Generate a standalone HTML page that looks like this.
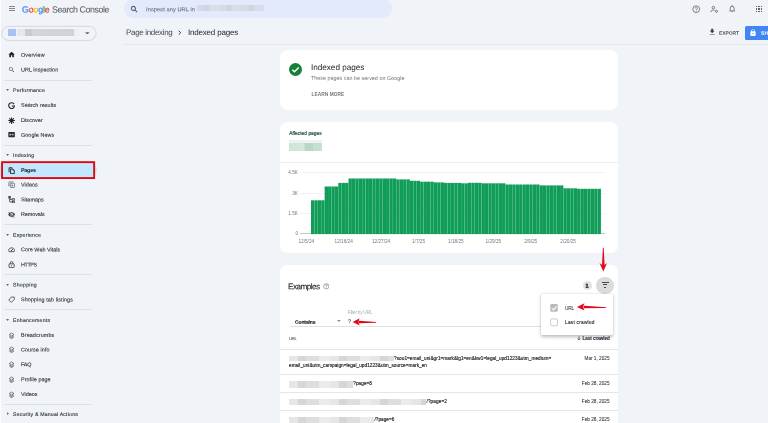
<!DOCTYPE html><html><head><meta charset="utf-8"><title>Google Search Console</title><style>
html,body{margin:0;padding:0;}body{width:768px;height:423px;overflow:hidden;background:#f0f4f9;position:relative;font-family:"Liberation Sans",sans-serif;}
#r{position:absolute;left:0;top:0;width:768px;height:423px;overflow:hidden;opacity:0.999;}
#r div,#r svg{position:absolute;}
#r span.t{position:absolute;white-space:nowrap;line-height:1;}
</style></head><body><div id="r">
<div style="left:8.6px;top:6.1px;width:6.4px;height:1.0px;background:#85898e;"></div>
<div style="left:8.6px;top:8.2px;width:6.4px;height:1.0px;background:#85898e;"></div>
<div style="left:8.6px;top:10.3px;width:6.4px;height:1.0px;background:#85898e;"></div>
<div style="left:124px;top:-1.2px;width:268px;height:19.2px;background:#e2eafc;border-radius:9.6px;"></div>
<svg style="left:130.3px;top:5.0px" width="8.6" height="8.6" viewBox="0 0 24 24"><path fill="#3c4043" stroke="#3c4043" stroke-width="0.6" d="M15.5 14h-.79l-.28-.27A6.47 6.47 0 0 0 16 9.5 6.5 6.5 0 1 0 9.5 16c1.61 0 3.09-.59 4.23-1.57l.27.28v.79l5 4.99L20.49 19l-4.99-5zm-6 0C7.01 14 5 11.99 5 9.5S7.01 5 9.500 5 14 7.01 14 9.5 11.99 14 9.5 14z"/></svg>
<div style="left:197px;top:4.8px;width:67px;height:6.2px;background:repeating-linear-gradient(90deg,#d6dbe7 0,#d6dbe7 7px,#cfd5e1 7px,#cfd5e1 13px,#d9deea 13px,#d9deea 22px);filter:blur(0.7px);"></div>
<svg style="left:692.2px;top:4.6px" width="8.4" height="8.4" viewBox="0 0 24 24"><circle cx="12" cy="12" r="9.800" fill="none" stroke="#50545a" stroke-width="2"/><path fill="none" stroke="#50545a" stroke-width="2" d="M8.800 9.800a3.200 3.200 0 1 1 5 2.600c-1.200.8-1.800 1.400-1.800 2.800"/><circle cx="12" cy="18" r="1.300" fill="#50545a"/></svg>
<svg style="left:709.8px;top:4.6px" width="8.600" height="8.600" viewBox="0 0 24 24"><g fill="none" stroke="#50545a" stroke-width="2.100"><circle cx="9.500" cy="7.500" r="3.600"/><path d="M2.500 20v-1.500c0-2.600 3.400-4.200 7-4.200 .9 0 1.700.1 2.500.3"/><circle cx="18" cy="17.500" r="3"/></g></svg>
<svg style="left:728.000px;top:4.300px" width="8.400" height="9" viewBox="0 0 24 24"><path fill="none" stroke="#50545a" stroke-width="2.100" stroke-linejoin="round" d="M6.500 17.500v-6.500a5.500 5.500 0 0 1 11 0v6.500l1.800 1.500H4.700z"/><path fill="#50545a" d="M10 20.500h4a2 2 0 0 1-4 0zM10.800 2.800h2.400v3h-2.400z"/></svg>
<div style="left:755.9px;top:5.7px;width:1.4px;height:1.4px;background:#5f6368;"></div>
<div style="left:755.9px;top:8.2px;width:1.4px;height:1.4px;background:#5f6368;"></div>
<div style="left:755.9px;top:10.7px;width:1.4px;height:1.4px;background:#5f6368;"></div>
<div style="left:758.4px;top:5.7px;width:1.4px;height:1.4px;background:#5f6368;"></div>
<div style="left:758.4px;top:8.2px;width:1.4px;height:1.4px;background:#5f6368;"></div>
<div style="left:758.4px;top:10.7px;width:1.4px;height:1.4px;background:#5f6368;"></div>
<div style="left:760.9px;top:5.7px;width:1.4px;height:1.4px;background:#5f6368;"></div>
<div style="left:760.9px;top:8.2px;width:1.4px;height:1.4px;background:#5f6368;"></div>
<div style="left:760.9px;top:10.7px;width:1.4px;height:1.4px;background:#5f6368;"></div>
<svg style="left:178.3px;top:30.4px" width="4" height="6" viewBox="0 0 4 6"><path d="M0.7 0.8 L2.8 2.700 L0.7 4.600" fill="none" stroke="#444746" stroke-width="1"/></svg>
<svg style="left:707.6px;top:27.4px" width="8.4" height="9.6" viewBox="0 0 24 24"><path fill="#3c4043" d="M19 9h-4V3H9v6H5l7 7 7-7zM5 18v2h14v-2H5z"/></svg>
<div style="left:745px;top:26px;width:30px;height:13.6px;background:#4285f4;border-radius:1.6px;"></div>
<svg style="left:749.3px;top:27.6px" width="8" height="9.2" viewBox="0 0 24 24"><path fill="#fff" d="M18 8h-1V6c0-2.760-2.240-5-5-5S7 3.240 7 6v2H6c-1.100 0-2 .9-2 2v10c0 1.100.9 2 2 2h12c1.100 0 2-.9 2-2V10c0-1.100-.9-2-2-2zm-6 9c-1.100 0-2-.9-2-2s.9-2 2-2 2 .9 2 2-.9 2-2 2zm3.100-9H8.900V6c0-1.710 1.390-3.100 3.100-3.100 1.710 0 3.100 1.390 3.100 3.100v2z"/></svg>
<div style="left:124px;top:43.9px;width:644px;height:0.9px;background:#e4e7eb;"></div>
<div style="left:0px;top:0px;width:0.9px;height:423px;background:#fbfcfe;"></div>
<svg style="left:0;top:24px" width="100" height="20" viewBox="0 0 100 20"><rect x="1.700" y="2.300" width="94.500" height="14.100" rx="7.050" fill="none" stroke="#cdd1d6" stroke-width="0.800"/></svg>
<div style="left:8.1px;top:28.9px;width:8.2px;height:7px;background:#a8c1f7;filter:blur(0.3px);"></div>
<div style="left:17px;top:29px;width:63px;height:6.8px;background:linear-gradient(90deg,#e6e7ea 0,#e6e7ea 12%,#c9cbcf 12%,#c9cbcf 24.500%,#d3d5d9 24.500%,#d0d2d6 90%,#eceef1 90%,#eef0f3 100%);filter:blur(0.6px);"></div>
<svg style="left:85px;top:31.6px" width="4.6" height="2.6" viewBox="0 0 10 5"><path fill="#5f6368" d="M0 0h10L5 5z"/></svg>
<svg style="left:8.0px;top:51.30px" width="7.2" height="7.2" viewBox="0 0 24 24"><path fill="#202124" d="M10 20.500v-6.500h4v6.500h5.500v-8.500h3L12 2.500 1.500 12h3v8.500z"/></svg>
<svg style="left:8.0px;top:66.20px" width="7.2" height="7.2" viewBox="0 0 24 24"><path fill="#3c4043" d="M15.500 14h-.79l-.28-.27A6.470 6.470 0 0 0 16 9.500 6.500 6.500 0 1 0 9.500 16c1.610 0 3.090-.59 4.230-1.570l.27.28v.79l5 4.990L20.490 19l-4.990-5zm-6 0C7.010 14 5 11.990 5 9.500S7.010 5 9.500 5 14 7.010 14 9.500 11.990 14 9.500 14z"/></svg>
<div style="left:4px;top:79.7px;width:88px;height:1px;background:#dde1e6;"></div>
<svg style="left:6.3px;top:89.2px" width="3.2" height="1.9" viewBox="0 0 10 5"><path fill="#3c4043" d="M0 0h10L5 5z"/></svg>
<svg style="left:8.0px;top:101.50px" width="7.2" height="7.2" viewBox="0 0 24 24"><path fill="none" stroke="#202124" stroke-width="3.800" d="M20.300 7.200A9.600 9.600 0 1 0 21.600 13.400H12.500"/></svg>
<svg style="left:8.0px;top:116.70px" width="7.2" height="7.2" viewBox="0 0 24 24"><g stroke="#202124" stroke-width="3.400" stroke-linecap="round"><path d="M12 2.500v19M2.500 12h19M5.300 5.300l13.400 13.400M18.700 5.300L5.300 18.700"/></g><circle cx="12" cy="12" r="5.500" fill="#202124"/></svg>
<svg style="left:8.0px;top:131.30px" width="7.2" height="7.2" viewBox="0 0 24 24"><rect x="1" y="3.500" width="22" height="17" rx="2" fill="#2a2d30"/><rect x="5" y="9.500" width="5.500" height="5" fill="#c9ced6"/><rect x="13" y="9.500" width="6" height="5" fill="#aeb4bd"/></svg>
<div style="left:4px;top:144.9px;width:88px;height:1px;background:#dde1e6;"></div>
<svg style="left:6.3px;top:154.1px" width="3.2" height="1.9" viewBox="0 0 10 5"><path fill="#3c4043" d="M0 0h10L5 5z"/></svg>
<div style="left:0px;top:162.6px;width:96.8px;height:14.8px;background:#d3e6fa;border-radius:0 7.4px 7.4px 0;"></div>
<svg style="left:0;top:160px" width="97" height="20" viewBox="0 0 97 20"><rect x="2.050" y="2.150" width="92.100" height="15.900" fill="#c2e7ff" stroke="#dc0a0e" stroke-width="1.900"/></svg>
<svg style="left:8.0px;top:166.60px" width="7.2" height="7.2" viewBox="0 0 24 24"><path fill="none" stroke="#202124" stroke-width="3" stroke-linejoin="round" d="M8.500 6.500h7.500l5 5v10.500h-12.500z"/><path fill="none" stroke="#202124" stroke-width="3" stroke-linejoin="round" d="M3.500 17.500V2.500h11"/><path fill="#202124" d="M15 6v6h6z"/></svg>
<svg style="left:8.0px;top:181.00px" width="7.2" height="7.2" viewBox="0 0 24 24"><rect x="7.500" y="7.500" width="14.500" height="14.500" rx="2.500" fill="none" stroke="#5f6368" stroke-width="2.600"/><path fill="none" stroke="#5f6368" stroke-width="2.600" d="M3 17.500V5.500a2.500 2.500 0 0 1 2.500-2.500h12"/><path fill="#5f6368" d="M12.200 10.800v8l6-4z"/></svg>
<svg style="left:8.0px;top:196.00px" width="7.2" height="7.2" viewBox="0 0 24 24"><g fill="none" stroke="#3c4043" stroke-width="2.600"><rect x="2.500" y="2" width="6" height="5.500"/><rect x="14" y="9" width="7.500" height="5"/><rect x="14" y="17.500" width="7.500" height="5"/><path d="M5.500 7.500v12.500H14M5.500 11.500H14"/></g></svg>
<svg style="left:8.0px;top:210.70px" width="7.2" height="7.2" viewBox="0 0 24 24"><path fill="#3c4043" stroke="#3c4043" stroke-width="0.800" d="M12 7c2.760 0 5 2.240 5 5 0 .65-.13 1.260-.36 1.830l2.920 2.920c1.510-1.260 2.700-2.890 3.430-4.750-1.730-4.390-6-7.500-11-7.500-1.400 0-2.740.25-3.980.7l2.160 2.160C10.740 7.130 11.350 7 12 7zM2 4.270l2.280 2.280.46.46A11.800 11.800 0 0 0 1 12c1.730 4.390 6 7.500 11 7.500 1.550 0 3.030-.3 4.380-.84l.42.42L19.730 22 21 20.730 3.270 3 2 4.270zM7.530 9.800l1.550 1.550c-.05.21-.08.43-.08.650 0 1.660 1.340 3 3 3 .22 0 .44-.3.650-.08l1.550 1.550c-.67.330-1.410.53-2.200.53-2.760 0-5-2.240-5-5 0-.79.200-1.530.53-2.200z"/></svg>
<div style="left:4px;top:223.7px;width:88px;height:1px;background:#dde1e6;"></div>
<svg style="left:6.3px;top:233.89999999999998px" width="3.2" height="1.9" viewBox="0 0 10 5"><path fill="#3c4043" d="M0 0h10L5 5z"/></svg>
<svg style="left:8.0px;top:246.00px" width="7.2" height="7.2" viewBox="0 0 24 24"><g fill="none" stroke="#3c4043" stroke-width="2.800" stroke-linejoin="round"><path d="M3.500 19C0.500 14 3 6 12 6S23.500 14 20.500 19z"/><path d="M12 14.500l4.500-4.500"/></g><circle cx="11.800" cy="14.800" r="2" fill="#3c4043"/></svg>
<svg style="left:8.0px;top:261.00px" width="7.2" height="7.2" viewBox="0 0 24 24"><g fill="none" stroke="#3c4043" stroke-width="2.800"><rect x="3.500" y="9.500" width="17" height="12.500" rx="1.500"/><path d="M7.500 9.500V6.500a4.500 4.500 0 0 1 9 0v3"/></g><circle cx="12" cy="15.800" r="2" fill="#3c4043"/></svg>
<div style="left:4px;top:274.1px;width:88px;height:1px;background:#dde1e6;"></div>
<svg style="left:6.3px;top:283.8px" width="3.2" height="1.9" viewBox="0 0 10 5"><path fill="#3c4043" d="M0 0h10L5 5z"/></svg>
<svg style="left:8.0px;top:296.00px" width="7.2" height="7.2" viewBox="0 0 24 24"><path fill="none" stroke="#3c4043" stroke-width="2.600" stroke-linejoin="round" d="M2.500 14l8-10.500H21v8.500l-10 9z"/></svg>
<div style="left:4px;top:309.1px;width:88px;height:1px;background:#dde1e6;"></div>
<svg style="left:6.3px;top:319.09999999999997px" width="3.2" height="1.9" viewBox="0 0 10 5"><path fill="#3c4043" d="M0 0h10L5 5z"/></svg>
<svg style="left:8.0px;top:331.50px" width="7.2" height="7.2" viewBox="0 0 24 24"><g fill="none" stroke="#4a4e52" stroke-width="2.500" stroke-linejoin="round"><path d="M12 3.500l7.500 5-7.500 5-7.500-5z"/><path d="M4.500 13l7.500 5 7.500-5"/><path d="M4.500 17l7.500 5 7.500-5"/></g></svg>
<svg style="left:8.0px;top:346.20px" width="7.2" height="7.2" viewBox="0 0 24 24"><g fill="none" stroke="#4a4e52" stroke-width="2.500" stroke-linejoin="round"><path d="M12 3.500l7.500 5-7.500 5-7.500-5z"/><path d="M4.500 13l7.500 5 7.500-5"/><path d="M4.500 17l7.500 5 7.500-5"/></g></svg>
<svg style="left:8.0px;top:360.90px" width="7.2" height="7.2" viewBox="0 0 24 24"><g fill="none" stroke="#4a4e52" stroke-width="2.500" stroke-linejoin="round"><path d="M12 3.500l7.500 5-7.500 5-7.500-5z"/><path d="M4.500 13l7.500 5 7.500-5"/><path d="M4.500 17l7.500 5 7.500-5"/></g></svg>
<svg style="left:8.0px;top:375.90px" width="7.2" height="7.2" viewBox="0 0 24 24"><g fill="none" stroke="#4a4e52" stroke-width="2.500" stroke-linejoin="round"><path d="M12 3.500l7.500 5-7.500 5-7.500-5z"/><path d="M4.500 13l7.500 5 7.500-5"/><path d="M4.500 17l7.500 5 7.500-5"/></g></svg>
<svg style="left:8.0px;top:390.50px" width="7.2" height="7.2" viewBox="0 0 24 24"><g fill="none" stroke="#4a4e52" stroke-width="2.500" stroke-linejoin="round"><path d="M12 3.500l7.500 5-7.500 5-7.500-5z"/><path d="M4.500 13l7.500 5 7.500-5"/><path d="M4.500 17l7.500 5 7.500-5"/></g></svg>
<div style="left:4px;top:403.8px;width:88px;height:1px;background:#dde1e6;"></div>
<svg style="left:6.6px;top:412.29999999999995px" width="2" height="3.2" viewBox="0 0 5 10"><path fill="#5f6368" d="M0 0v10l5-5z"/></svg>
<div style="left:280px;top:50px;width:338px;height:59.6px;background:#fff;border-radius:7.5px;"></div>
<svg style="left:288.8px;top:63.2px" width="13" height="13" viewBox="0 0 24 24"><circle cx="12" cy="12" r="12" fill="#188038"/><path d="M6.200 12.400l3.900 3.900 7.800-8" fill="none" stroke="#fff" stroke-width="2.600"/></svg>
<div style="left:280px;top:121.5px;width:338px;height:131.6px;background:#fff;border-radius:7.5px;"></div>
<div style="left:288.6px;top:139.9px;width:33.3px;height:3.2px;background:#edf4f0;filter:blur(0.3px);"></div>
<div style="left:288.6px;top:142.8px;width:33.3px;height:8.2px;background:linear-gradient(90deg,#cde6d9 0,#d2e9dc 46%,#b6d8c4 49%,#b6d8c4 72%,#c3dfce 74%,#c6e1d1 100%);filter:blur(0.4px);"></div>
<div style="left:280px;top:161.7px;width:338px;height:0.8px;background:#eaecee;"></div>
<div style="left:300px;top:172.1px;width:305px;height:0.8px;background:#f1f1f1;"></div>
<div style="left:300px;top:192.5px;width:305px;height:0.8px;background:#f1f1f1;"></div>
<div style="left:300px;top:212.9px;width:305px;height:0.8px;background:#f1f1f1;"></div>
<div style="left:300px;top:233.1px;width:305px;height:0.8px;background:#c6c9cd;"></div>
<svg style="left:300px;top:165px" width="310" height="70" viewBox="0 0 310 70"><g fill="#0f9d58"><rect x="11.00" y="35.30" width="3.34" height="33.80"/><rect x="14.41" y="35.30" width="3.34" height="33.80"/><rect x="17.82" y="35.30" width="3.34" height="33.80"/><rect x="21.24" y="35.30" width="3.34" height="33.80"/><rect x="24.65" y="21.50" width="3.34" height="47.60"/><rect x="28.06" y="21.50" width="3.34" height="47.60"/><rect x="31.47" y="21.50" width="3.34" height="47.60"/><rect x="34.88" y="21.50" width="3.34" height="47.60"/><rect x="38.29" y="17.90" width="3.34" height="51.20"/><rect x="41.71" y="17.90" width="3.34" height="51.20"/><rect x="45.12" y="17.90" width="3.34" height="51.20"/><rect x="48.53" y="13.50" width="3.34" height="55.60"/><rect x="51.94" y="13.50" width="3.34" height="55.60"/><rect x="55.35" y="13.50" width="3.34" height="55.60"/><rect x="58.76" y="13.50" width="3.34" height="55.60"/><rect x="62.18" y="13.50" width="3.34" height="55.60"/><rect x="65.59" y="13.50" width="3.34" height="55.60"/><rect x="69.00" y="13.50" width="3.34" height="55.60"/><rect x="72.41" y="13.50" width="3.34" height="55.60"/><rect x="75.82" y="13.50" width="3.34" height="55.60"/><rect x="79.24" y="13.50" width="3.34" height="55.60"/><rect x="82.65" y="13.50" width="3.34" height="55.60"/><rect x="86.06" y="13.50" width="3.34" height="55.60"/><rect x="89.47" y="13.50" width="3.34" height="55.60"/><rect x="92.88" y="13.50" width="3.34" height="55.60"/><rect x="96.29" y="14.40" width="3.34" height="54.70"/><rect x="99.71" y="14.40" width="3.34" height="54.70"/><rect x="103.12" y="14.40" width="3.34" height="54.70"/><rect x="106.53" y="14.40" width="3.34" height="54.70"/><rect x="109.94" y="15.80" width="3.34" height="53.30"/><rect x="113.35" y="15.80" width="3.34" height="53.30"/><rect x="116.76" y="15.80" width="3.34" height="53.30"/><rect x="120.18" y="16.70" width="3.34" height="52.40"/><rect x="123.59" y="16.70" width="3.34" height="52.40"/><rect x="127.00" y="16.70" width="3.34" height="52.40"/><rect x="130.41" y="16.70" width="3.34" height="52.40"/><rect x="133.82" y="17.40" width="3.34" height="51.70"/><rect x="137.24" y="17.40" width="3.34" height="51.70"/><rect x="140.65" y="17.40" width="3.34" height="51.70"/><rect x="144.06" y="17.90" width="3.34" height="51.20"/><rect x="147.47" y="17.90" width="3.34" height="51.20"/><rect x="150.88" y="17.90" width="3.34" height="51.20"/><rect x="154.29" y="17.90" width="3.34" height="51.20"/><rect x="157.71" y="17.90" width="3.34" height="51.20"/><rect x="161.12" y="18.30" width="3.34" height="50.80"/><rect x="164.53" y="18.30" width="3.34" height="50.80"/><rect x="167.94" y="17.80" width="3.34" height="51.30"/><rect x="171.35" y="17.80" width="3.34" height="51.30"/><rect x="174.76" y="17.80" width="3.34" height="51.30"/><rect x="178.18" y="17.80" width="3.34" height="51.30"/><rect x="181.59" y="18.30" width="3.34" height="50.80"/><rect x="185.00" y="18.30" width="3.34" height="50.80"/><rect x="188.41" y="18.30" width="3.34" height="50.80"/><rect x="191.82" y="18.30" width="3.34" height="50.80"/><rect x="195.24" y="18.30" width="3.34" height="50.80"/><rect x="198.65" y="18.30" width="3.34" height="50.80"/><rect x="202.06" y="18.30" width="3.34" height="50.80"/><rect x="205.47" y="19.50" width="3.34" height="49.60"/><rect x="208.88" y="19.50" width="3.34" height="49.60"/><rect x="212.29" y="19.50" width="3.34" height="49.60"/><rect x="215.71" y="19.50" width="3.34" height="49.60"/><rect x="219.12" y="19.50" width="3.34" height="49.60"/><rect x="222.53" y="19.50" width="3.34" height="49.60"/><rect x="225.94" y="19.50" width="3.34" height="49.60"/><rect x="229.35" y="19.50" width="3.34" height="49.60"/><rect x="232.76" y="19.50" width="3.34" height="49.60"/><rect x="236.18" y="19.50" width="3.34" height="49.60"/><rect x="239.59" y="20.40" width="3.34" height="48.70"/><rect x="243.00" y="20.40" width="3.34" height="48.70"/><rect x="246.41" y="20.40" width="3.34" height="48.70"/><rect x="249.82" y="20.40" width="3.34" height="48.70"/><rect x="253.24" y="20.40" width="3.34" height="48.70"/><rect x="256.65" y="20.40" width="3.34" height="48.70"/><rect x="260.06" y="20.40" width="3.34" height="48.70"/><rect x="263.47" y="23.30" width="3.34" height="45.80"/><rect x="266.88" y="23.30" width="3.34" height="45.80"/><rect x="270.29" y="23.30" width="3.34" height="45.80"/><rect x="273.71" y="23.30" width="3.34" height="45.80"/><rect x="277.12" y="23.80" width="3.34" height="45.30"/><rect x="280.53" y="23.80" width="3.34" height="45.30"/><rect x="283.94" y="23.80" width="3.34" height="45.30"/><rect x="287.35" y="23.80" width="3.34" height="45.30"/><rect x="290.76" y="23.80" width="3.34" height="45.30"/><rect x="294.18" y="23.80" width="3.34" height="45.30"/><rect x="297.59" y="23.80" width="3.34" height="45.30"/></g></svg>
<div style="left:280px;top:264.6px;width:338px;height:170px;background:#fff;border-radius:7.5px;"></div>
<svg style="left:322.6px;top:283.3px" width="6.6" height="6.6" viewBox="0 0 24 24"><circle cx="12" cy="12" r="9.500" fill="none" stroke="#5f6368" stroke-width="2"/><path fill="none" stroke="#5f6368" stroke-width="2" d="M9 9.500a3 3 0 1 1 4.500 2.600c-1 .6-1.500 1.200-1.500 2.400"/><circle cx="12" cy="17.600" r="1.200" fill="#5f6368"/></svg>
<div style="left:583.0px;top:281.0px;width:8.6px;height:8.6px;background:#e2e2e2;border-radius:50%;"></div>
<div style="left:596.1px;top:276.7px;width:17.8px;height:17.8px;background:#dadbdc;border-radius:50%;"></div>
<div style="left:601.6px;top:282.05px;width:7.1px;height:0.75px;background:#44484c;"></div>
<div style="left:603.0px;top:284.3px;width:4.3px;height:0.75px;background:#44484c;"></div>
<div style="left:604.25px;top:286.55px;width:1.8px;height:0.75px;background:#44484c;"></div>
<svg style="left:337.300px;top:320.200px" width="3.800" height="1.900" viewBox="0 0 10 5"><path fill="#8a8d91" d="M0 0h10L5 5z"/></svg>
<div style="left:289.5px;top:326.0px;width:321px;height:0.8px;background:#e1e1e1;"></div>
<svg style="left:577.3px;top:336.3px" width="4" height="4.6" viewBox="0 0 8 9"><path d="M4 0.500v7M1 4.800l3 3 3-3" fill="none" stroke="#1f1f1f" stroke-width="1.200"/></svg>
<div style="left:280px;top:349.1px;width:338px;height:0.8px;background:#e4e6e9;"></div>
<div style="left:280px;top:374.1px;width:338px;height:0.8px;background:#e4e6e9;"></div>
<div style="left:280px;top:392.1px;width:338px;height:0.8px;background:#e4e6e9;"></div>
<div style="left:280px;top:410.1px;width:338px;height:0.8px;background:#e4e6e9;"></div>
<div style="left:288.8px;top:356.2px;width:105.0px;height:5px;background:repeating-linear-gradient(90deg,#e6e6e6 0,#e6e6e6 9px,#d6d6d6 9px,#d6d6d6 17px,#dedede 17px,#dedede 30px,#ebebeb 30px,#ebebeb 41px);filter:blur(0.5px);"></div>
<div style="left:288.8px;top:380.7px;width:64.5px;height:7px;background:repeating-linear-gradient(90deg,#e6e6e6 0,#e6e6e6 9px,#d6d6d6 9px,#d6d6d6 17px,#dedede 17px,#dedede 30px,#ebebeb 30px,#ebebeb 41px);filter:blur(0.5px);"></div>
<div style="left:288.8px;top:398.6px;width:137.5px;height:6px;background:repeating-linear-gradient(90deg,#e6e6e6 0,#e6e6e6 9px,#d6d6d6 9px,#d6d6d6 17px,#dedede 17px,#dedede 30px,#ebebeb 30px,#ebebeb 41px);filter:blur(0.5px);"></div>
<div style="left:288.8px;top:416.6px;width:85.69999999999999px;height:6px;background:repeating-linear-gradient(90deg,#e6e6e6 0,#e6e6e6 9px,#d6d6d6 9px,#d6d6d6 17px,#dedede 17px,#dedede 30px,#ebebeb 30px,#ebebeb 41px);filter:blur(0.5px);"></div>
<div style="left:541.4px;top:293.9px;width:71.7px;height:41.6px;background:#fff;border-radius:1.500px;box-shadow:0 1.200px 3.500px rgba(0,0,0,0.26),0 0 1px rgba(0,0,0,0.18);"></div>
<svg style="left:548px;top:302px" width="12" height="26" viewBox="0 0 12 26"><rect x="2.300" y="2.000" width="7.500" height="7.700" rx="1.200" fill="#bababa"/><path d="M3.700 6.000l1.900 1.900L8.600 4.300" fill="none" stroke="#fff" stroke-width="1.050"/><rect x="2.650" y="16.950" width="6.800" height="6.800" rx="0.900" fill="#fff" stroke="#b2b5b8" stroke-width="0.700"/></svg>
<svg style="left:0;top:0" width="768" height="423" viewBox="0 0 768 423"><g fill="#e0081a"><path d="M602.900 247.800L603.700 247.800L604.600 265.500L602.000 265.500z"/><path d="M599.500 263.000Q603.300 266.800 607.100 263.000L603.300 271.500z"/><path d="M606.100 307.300L606.100 308.100L584 308.300L584 305.700z"/><path d="M577.000 306.900L584.500 303.300Q582.300 306.900 584.500 310.500z"/><path d="M376.100 322.000L376.100 322.800L359 323.200L359 320.700z"/><path d="M352.600 321.900L359.700 318.300Q357.600 321.900 359.700 325.500z"/></g></svg>
<span class="t" id="t0" style="top:5px;font-size:8.8px;font-weight:400;color:#1f1f1f;letter-spacing:-0.156px;left:22px;transform:translate(0,0.60px) skewY(0.03deg);-webkit-text-stroke:0.25px;"><span style="color:#4285f4">G</span><span style="color:#ea4335">o</span><span style="color:#fbbc05">o</span><span style="color:#4285f4">g</span><span style="color:#34a853">l</span><span style="color:#ea4335">e</span></span>
<span class="t" id="t1" style="top:5px;font-size:8.8px;font-weight:400;color:#5f6368;letter-spacing:-0.400px;left:52px;transform:translate(0,0.60px) skewY(0.03deg);-webkit-text-stroke:0.1px #5f6368;">Search Console</span>
<span class="t" id="t2" style="top:7px;font-size:5.6px;font-weight:400;color:#6a6e73;letter-spacing:0.108px;left:146px;transform:translate(0,0.15px) skewY(0.03deg);-webkit-text-stroke:0.1px #6a6e73;">Inspect any URL in</span>
<span class="t" id="t3" style="top:29px;font-size:8px;font-weight:400;color:#444746;letter-spacing:-0.325px;left:125.5px;transform:translate(0,0.00px) skewY(0.03deg);">Page indexing</span>
<span class="t" id="t4" style="top:29px;font-size:8px;font-weight:400;color:#1f1f1f;letter-spacing:-0.192px;left:187.5px;transform:translate(0,0.00px) skewY(0.03deg);">Indexed pages</span>
<span class="t" id="t5" style="top:30px;font-size:5.0px;font-weight:700;color:#54585c;letter-spacing:-0.094px;left:719px;transform:translate(0,0.84px) skewY(0.03deg);">EXPORT</span>
<span class="t" id="t6" style="top:30px;font-size:5.0px;font-weight:700;color:#fff;left:760.7px;transform:translate(0,0.84px) skewY(0.03deg);letter-spacing:0.2px;">SHARE</span>
<span class="t" id="t7" style="top:52px;font-size:5.4px;font-weight:400;color:#2a2d30;letter-spacing:0.166px;left:20.7px;transform:translate(0,0.68px) skewY(0.03deg);-webkit-text-stroke:0.1px #2a2d30;">Overview</span>
<span class="t" id="t8" style="top:67px;font-size:5.4px;font-weight:400;color:#2a2d30;letter-spacing:0.060px;left:20.7px;transform:translate(0,0.58px) skewY(0.03deg);-webkit-text-stroke:0.1px #2a2d30;">URL inspection</span>
<span class="t" id="t9" style="top:88px;font-size:5.2px;font-weight:400;color:#3c4043;letter-spacing:0.209px;left:13.0px;transform:translate(0,0.01px) skewY(0.03deg);-webkit-text-stroke:0.15px #3c4043;">Performance</span>
<span class="t" id="t10" style="top:102px;font-size:5.4px;font-weight:400;color:#2a2d30;letter-spacing:0.052px;left:20.7px;transform:translate(0,0.88px) skewY(0.03deg);-webkit-text-stroke:0.1px #2a2d30;">Search results</span>
<span class="t" id="t11" style="top:118px;font-size:5.4px;font-weight:400;color:#2a2d30;letter-spacing:0.116px;left:20.7px;transform:translate(0,0.08px) skewY(0.03deg);-webkit-text-stroke:0.1px #2a2d30;">Discover</span>
<span class="t" id="t12" style="top:132px;font-size:5.4px;font-weight:400;color:#2a2d30;letter-spacing:0.084px;left:20.7px;transform:translate(0,0.68px) skewY(0.03deg);-webkit-text-stroke:0.1px #2a2d30;">Google News</span>
<span class="t" id="t13" style="top:152px;font-size:5.2px;font-weight:400;color:#3c4043;letter-spacing:0.234px;left:13.0px;transform:translate(0,0.91px) skewY(0.03deg);-webkit-text-stroke:0.15px #3c4043;">Indexing</span>
<span class="t" id="t14" style="top:167px;font-size:5.4px;font-weight:700;color:#1f1f1f;letter-spacing:-0.238px;left:20.7px;transform:translate(0,0.98px) skewY(0.03deg);">Pages</span>
<span class="t" id="t15" style="top:182px;font-size:5.4px;font-weight:400;color:#2a2d30;letter-spacing:0.085px;left:20.7px;transform:translate(0,0.38px) skewY(0.03deg);-webkit-text-stroke:0.1px #2a2d30;">Videos</span>
<span class="t" id="t16" style="top:197px;font-size:5.4px;font-weight:400;color:#2a2d30;letter-spacing:0.027px;left:20.7px;transform:translate(0,0.38px) skewY(0.03deg);-webkit-text-stroke:0.1px #2a2d30;">Sitemaps</span>
<span class="t" id="t17" style="top:212px;font-size:5.4px;font-weight:400;color:#2a2d30;letter-spacing:-0.046px;left:20.7px;transform:translate(0,0.08px) skewY(0.03deg);-webkit-text-stroke:0.1px #2a2d30;">Removals</span>
<span class="t" id="t18" style="top:232px;font-size:5.2px;font-weight:400;color:#3c4043;letter-spacing:0.215px;left:13.0px;transform:translate(0,0.71px) skewY(0.03deg);-webkit-text-stroke:0.15px #3c4043;">Experience</span>
<span class="t" id="t19" style="top:247px;font-size:5.4px;font-weight:400;color:#2a2d30;letter-spacing:0.036px;left:20.7px;transform:translate(0,0.38px) skewY(0.03deg);-webkit-text-stroke:0.1px #2a2d30;">Core Web Vitals</span>
<span class="t" id="t20" style="top:262px;font-size:5.4px;font-weight:400;color:#2a2d30;letter-spacing:-0.374px;left:20.7px;transform:translate(0,0.38px) skewY(0.03deg);-webkit-text-stroke:0.1px #2a2d30;">HTTPS</span>
<span class="t" id="t21" style="top:282px;font-size:5.2px;font-weight:400;color:#3c4043;letter-spacing:0.258px;left:13.0px;transform:translate(0,0.61px) skewY(0.03deg);-webkit-text-stroke:0.15px #3c4043;">Shopping</span>
<span class="t" id="t22" style="top:297px;font-size:5.4px;font-weight:400;color:#2a2d30;letter-spacing:0.107px;left:20.7px;transform:translate(0,0.38px) skewY(0.03deg);-webkit-text-stroke:0.1px #2a2d30;">Shopping tab listings</span>
<span class="t" id="t23" style="top:317px;font-size:5.2px;font-weight:400;color:#3c4043;letter-spacing:0.216px;left:13.0px;transform:translate(0,0.91px) skewY(0.03deg);-webkit-text-stroke:0.15px #3c4043;">Enhancements</span>
<span class="t" id="t24" style="top:332px;font-size:5.4px;font-weight:400;color:#2a2d30;letter-spacing:0.122px;left:20.7px;transform:translate(0,0.88px) skewY(0.03deg);-webkit-text-stroke:0.1px #2a2d30;">Breadcrumbs</span>
<span class="t" id="t25" style="top:347px;font-size:5.4px;font-weight:400;color:#2a2d30;letter-spacing:0.093px;left:20.7px;transform:translate(0,0.58px) skewY(0.03deg);-webkit-text-stroke:0.1px #2a2d30;">Course info</span>
<span class="t" id="t26" style="top:362px;font-size:5.4px;font-weight:400;color:#2a2d30;letter-spacing:-0.132px;left:20.7px;transform:translate(0,0.28px) skewY(0.03deg);-webkit-text-stroke:0.1px #2a2d30;">FAQ</span>
<span class="t" id="t27" style="top:377px;font-size:5.4px;font-weight:400;color:#2a2d30;letter-spacing:0.077px;left:20.7px;transform:translate(0,0.28px) skewY(0.03deg);-webkit-text-stroke:0.1px #2a2d30;">Profile page</span>
<span class="t" id="t28" style="top:391px;font-size:5.4px;font-weight:400;color:#2a2d30;letter-spacing:0.035px;left:20.7px;transform:translate(0,0.88px) skewY(0.03deg);-webkit-text-stroke:0.1px #2a2d30;">Videos</span>
<span class="t" id="t29" style="top:411px;font-size:5.2px;font-weight:400;color:#3c4043;letter-spacing:0.189px;left:13.0px;transform:translate(0,0.91px) skewY(0.03deg);-webkit-text-stroke:0.15px #3c4043;">Security &amp; Manual Actions</span>
<span class="t" id="t30" style="top:64px;font-size:8.2px;font-weight:400;color:#1f1f1f;letter-spacing:-0.032px;left:311.4px;transform:translate(0,0.09px) skewY(0.03deg);">Indexed pages</span>
<span class="t" id="t31" style="top:75px;font-size:5.4px;font-weight:400;color:#6c7074;letter-spacing:0.014px;left:311.4px;transform:translate(0,0.88px) skewY(0.03deg);">These pages can be served on Google</span>
<span class="t" id="t32" style="top:93px;font-size:4.8px;font-weight:700;color:#74787c;letter-spacing:0.075px;left:311.4px;">LEARN MORE</span>
<span class="t" id="t33" style="top:132px;font-size:4.8px;font-weight:400;color:#1d5745;letter-spacing:0.041px;left:289.2px;-webkit-text-stroke:0.2px #1d5745;">Affected pages</span>
<span class="t" id="t34" style="top:171px;font-size:4.7px;font-weight:400;color:#72767b;right:470.00px;">4.5K</span>
<span class="t" id="t35" style="top:192px;font-size:4.7px;font-weight:400;color:#72767b;right:470.00px;">3K</span>
<span class="t" id="t36" style="top:212px;font-size:4.7px;font-weight:400;color:#72767b;right:470.00px;">1.5K</span>
<span class="t" id="t37" style="top:232px;font-size:4.7px;font-weight:400;color:#72767b;right:470.00px;">0</span>
<span class="t" id="t38" style="top:240px;font-size:4.7px;font-weight:400;color:#72767b;left:306.3px;transform:translate(-50%,0);">12/5/24</span>
<span class="t" id="t39" style="top:240px;font-size:4.7px;font-weight:400;color:#72767b;left:343.7px;transform:translate(-50%,0);">12/16/24</span>
<span class="t" id="t40" style="top:240px;font-size:4.7px;font-weight:400;color:#72767b;left:381.1px;transform:translate(-50%,0);">12/27/24</span>
<span class="t" id="t41" style="top:240px;font-size:4.7px;font-weight:400;color:#72767b;left:418.5px;transform:translate(-50%,0);">1/7/25</span>
<span class="t" id="t42" style="top:240px;font-size:4.7px;font-weight:400;color:#72767b;left:455.9px;transform:translate(-50%,0);">1/18/25</span>
<span class="t" id="t43" style="top:240px;font-size:4.7px;font-weight:400;color:#72767b;left:493.3px;transform:translate(-50%,0);">1/29/25</span>
<span class="t" id="t44" style="top:240px;font-size:4.7px;font-weight:400;color:#72767b;left:530.7px;transform:translate(-50%,0);">2/9/25</span>
<span class="t" id="t45" style="top:240px;font-size:4.7px;font-weight:400;color:#72767b;left:568.1px;transform:translate(-50%,0);">2/20/25</span>
<span class="t" id="t46" style="top:283px;font-size:8.2px;font-weight:400;color:#1f1f1f;letter-spacing:-0.557px;left:287.7px;transform:translate(0,0.19px) skewY(0.03deg);-webkit-text-stroke:0.1px #1f1f1f;">Examples</span>
<span class="t" id="t47" style="top:283px;font-size:5.4px;font-weight:700;color:#111;left:587.4px;transform:translate(-50%,0.38px) skewY(0.03deg);-webkit-text-stroke:0.3px #111;">1</span>
<span class="t" id="t48" style="top:319px;font-size:5.0px;font-weight:700;color:#111;letter-spacing:-0.124px;left:295px;transform:translate(0,0.84px) skewY(0.03deg);-webkit-text-stroke:0.12px #111;">Contains</span>
<span class="t" id="t49" style="top:311px;font-size:4.7px;font-weight:400;color:#a9adb1;letter-spacing:-0.243px;left:347.8px;">Filter by URL</span>
<span class="t" id="t50" style="top:319px;font-size:5.6px;font-weight:400;color:#2a2a2a;left:347.6px;transform:translate(0,0.35px) skewY(0.03deg);-webkit-text-stroke:0.05px #2a2a2a;">?</span>
<span class="t" id="t51" style="top:337px;font-size:4.3px;font-weight:400;color:#4d5156;letter-spacing:-0.336px;left:289px;-webkit-text-stroke:0.05px #4d5156;">URL</span>
<span class="t" id="t52" style="top:337px;font-size:4.5px;font-weight:700;color:#1a1c2a;right:158.20px;-webkit-text-stroke:0.08px #1a1c2a;">Last crawled</span>
<span class="t" id="t53" style="top:357px;font-size:4.7px;font-weight:400;color:#1f1f1f;letter-spacing:0.056px;left:394px;-webkit-text-stroke:0.15px #1f1f1f;">?sou1=email_uni&amp;gr1=mark&amp;lg1=en&amp;kw1=legal_upd1223&amp;utm_medium=</span>
<span class="t" id="t54" style="top:364px;font-size:4.7px;font-weight:400;color:#1f1f1f;letter-spacing:0.036px;left:289px;-webkit-text-stroke:0.15px #1f1f1f;">email_uni&amp;utm_campaign=legal_upd1223&amp;utm_source=mark_en</span>
<span class="t" id="t55" style="top:382px;font-size:4.7px;font-weight:400;color:#1f1f1f;letter-spacing:0.044px;left:353.3px;-webkit-text-stroke:0.15px #1f1f1f;">?page=8</span>
<span class="t" id="t56" style="top:400px;font-size:4.7px;font-weight:400;color:#1f1f1f;letter-spacing:0.102px;left:426.5px;-webkit-text-stroke:0.15px #1f1f1f;">/?page=2</span>
<span class="t" id="t57" style="top:418px;font-size:4.7px;font-weight:400;color:#1f1f1f;letter-spacing:0.014px;left:374.5px;-webkit-text-stroke:0.15px #1f1f1f;">/?page=6</span>
<span class="t" id="t58" style="top:357px;font-size:4.7px;font-weight:400;color:#2a2d30;right:158.50px;-webkit-text-stroke:0.05px #2a2d30;">Mar 1, 2025</span>
<span class="t" id="t59" style="top:382px;font-size:4.7px;font-weight:400;color:#2a2d30;right:158.50px;-webkit-text-stroke:0.05px #2a2d30;">Feb 28, 2025</span>
<span class="t" id="t60" style="top:400px;font-size:4.7px;font-weight:400;color:#2a2d30;right:158.50px;-webkit-text-stroke:0.05px #2a2d30;">Feb 28, 2025</span>
<span class="t" id="t61" style="top:418px;font-size:4.7px;font-weight:400;color:#2a2d30;right:158.50px;-webkit-text-stroke:0.05px #2a2d30;">Feb 28, 2025</span>
<span class="t" id="t62" style="top:307px;font-size:4.8px;font-weight:400;color:#2a2a2a;letter-spacing:-0.203px;left:565px;-webkit-text-stroke:0.03px #2a2a2a;">URL</span>
<span class="t" id="t63" style="top:321px;font-size:4.8px;font-weight:400;color:#1f1f1f;letter-spacing:0.230px;left:565px;-webkit-text-stroke:0.1px #1f1f1f;">Last crawled</span>
</div></body></html>
